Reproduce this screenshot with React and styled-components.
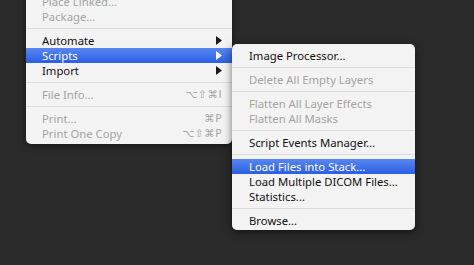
import React from 'react'
import styled, { createGlobalStyle } from 'styled-components'

const GlobalStyle = createGlobalStyle`
    html, body {
        margin: 0;
        padding: 0;
        background: #2a2a2a;
        overflow: hidden;
    }
    body {
        font-family: "Noto Sans", "DejaVu Sans", sans-serif;
        -webkit-font-smoothing: antialiased;
    }
`

const mainItems = [
    { label: 'Place Linked...', disabled: true },
    { label: 'Package...', disabled: true },
    { sep: true },
    { label: 'Automate', arrow: true },
    { label: 'Scripts', arrow: true, active: true, sub: true },
    { label: 'Import', arrow: true },
    { sep: true },
    { label: 'File Info...', disabled: true, keys: '⌥⇧⌘I' },
    { sep: true },
    { label: 'Print...', disabled: true, keys: '⌘P' },
    { label: 'Print One Copy', disabled: true, keys: '⌥⇧⌘P' },
]

const subItems = [
    { label: 'Image Processor...' },
    { sep: true },
    { label: 'Delete All Empty Layers', disabled: true },
    { sep: true },
    { label: 'Flatten All Layer Effects', disabled: true },
    { label: 'Flatten All Masks', disabled: true },
    { sep: true },
    { label: 'Script Events Manager...' },
    { sep: true },
    { label: 'Load Files into Stack...', active: true },
    { label: 'Load Multiple DICOM Files...' },
    { label: 'Statistics...' },
    { sep: true },
    { label: 'Browse...' },
]

function Arrow({ light }) {
    return (
        <svg width="6" height="9" viewBox="0 0 6 9">
            <path d="M0 0 L6 4.5 L0 9 Z" fill={light ? '#ffffff' : '#1a1a1a'} />
        </svg>
    )
}

function SubMenu() {
    return (
        <Popup>
            {subItems.map((it, i) =>
                it.sep ? (
                    <Separator key={i} />
                ) : (
                    <Item key={i} active={it.active} disabled={it.disabled} indent={17}>
                        <Label>{it.label}</Label>
                    </Item>
                )
            )}
        </Popup>
    )
}

export default function App() {
    return (
        <Page>
            <GlobalStyle />
            <Menu>
                {mainItems.map((it, i) =>
                    it.sep ? (
                        <Separator key={i} />
                    ) : (
                        <Item key={i} active={it.active} disabled={it.disabled} indent={16}>
                            <Label>{it.label}</Label>
                            {it.keys && <Keys>{it.keys}</Keys>}
                            {it.arrow && <Arrow light={it.active} />}
                            {it.sub && <SubMenu />}
                        </Item>
                    )
                )}
            </Menu>
        </Page>
    )
}

const Page = styled.div`
    width: 474px;
    height: 265px;
    overflow: hidden;
    background: #2a2a2a;
`

const Menu = styled.div`
    margin-top: -9px;
    margin-left: 26px;
    width: 206px;
    padding: 3px 0 3px;
    background: #f3f3f3;
    border-radius: 0 0 5px 5px;
    box-shadow: 0 2px 6px rgba(0, 0, 0, 0.5);
`

const Popup = styled.div`
    position: absolute;
    left: 206px;
    top: -4px;
    width: 183px;
    padding: 4px 0 2px;
    background: #f3f3f3;
    border-radius: 5px;
    box-shadow: 0 2px 8px rgba(0, 0, 0, 0.55);
    z-index: 2;
`

const Item = styled.div`
    position: relative;
    height: 15px;
    display: flex;
    align-items: center;
    padding: 0 10px 0 ${props => props.indent}px;
    font-size: 11.3px;
    line-height: 15px;
    color: ${props => props.active ? '#ffffff' : props.disabled ? '#a3a3a3' : '#111111'};
    background: ${props => props.active ? 'linear-gradient(#5a86f0, #2a5fe6)' : 'transparent'};
    white-space: nowrap;
`

const Label = styled.span`
    flex: 1;
    height: 15px;
    overflow: hidden;
`

const Keys = styled.span`
    font-family: "DejaVu Sans", sans-serif;
    font-size: 10.5px;
    height: 15px;
    overflow: hidden;
    letter-spacing: 0.5px;
    color: #a3a3a3;
`

const Separator = styled.div`
    height: 1px;
    margin: 4px 0;
    background: #dcdcdc;
`
